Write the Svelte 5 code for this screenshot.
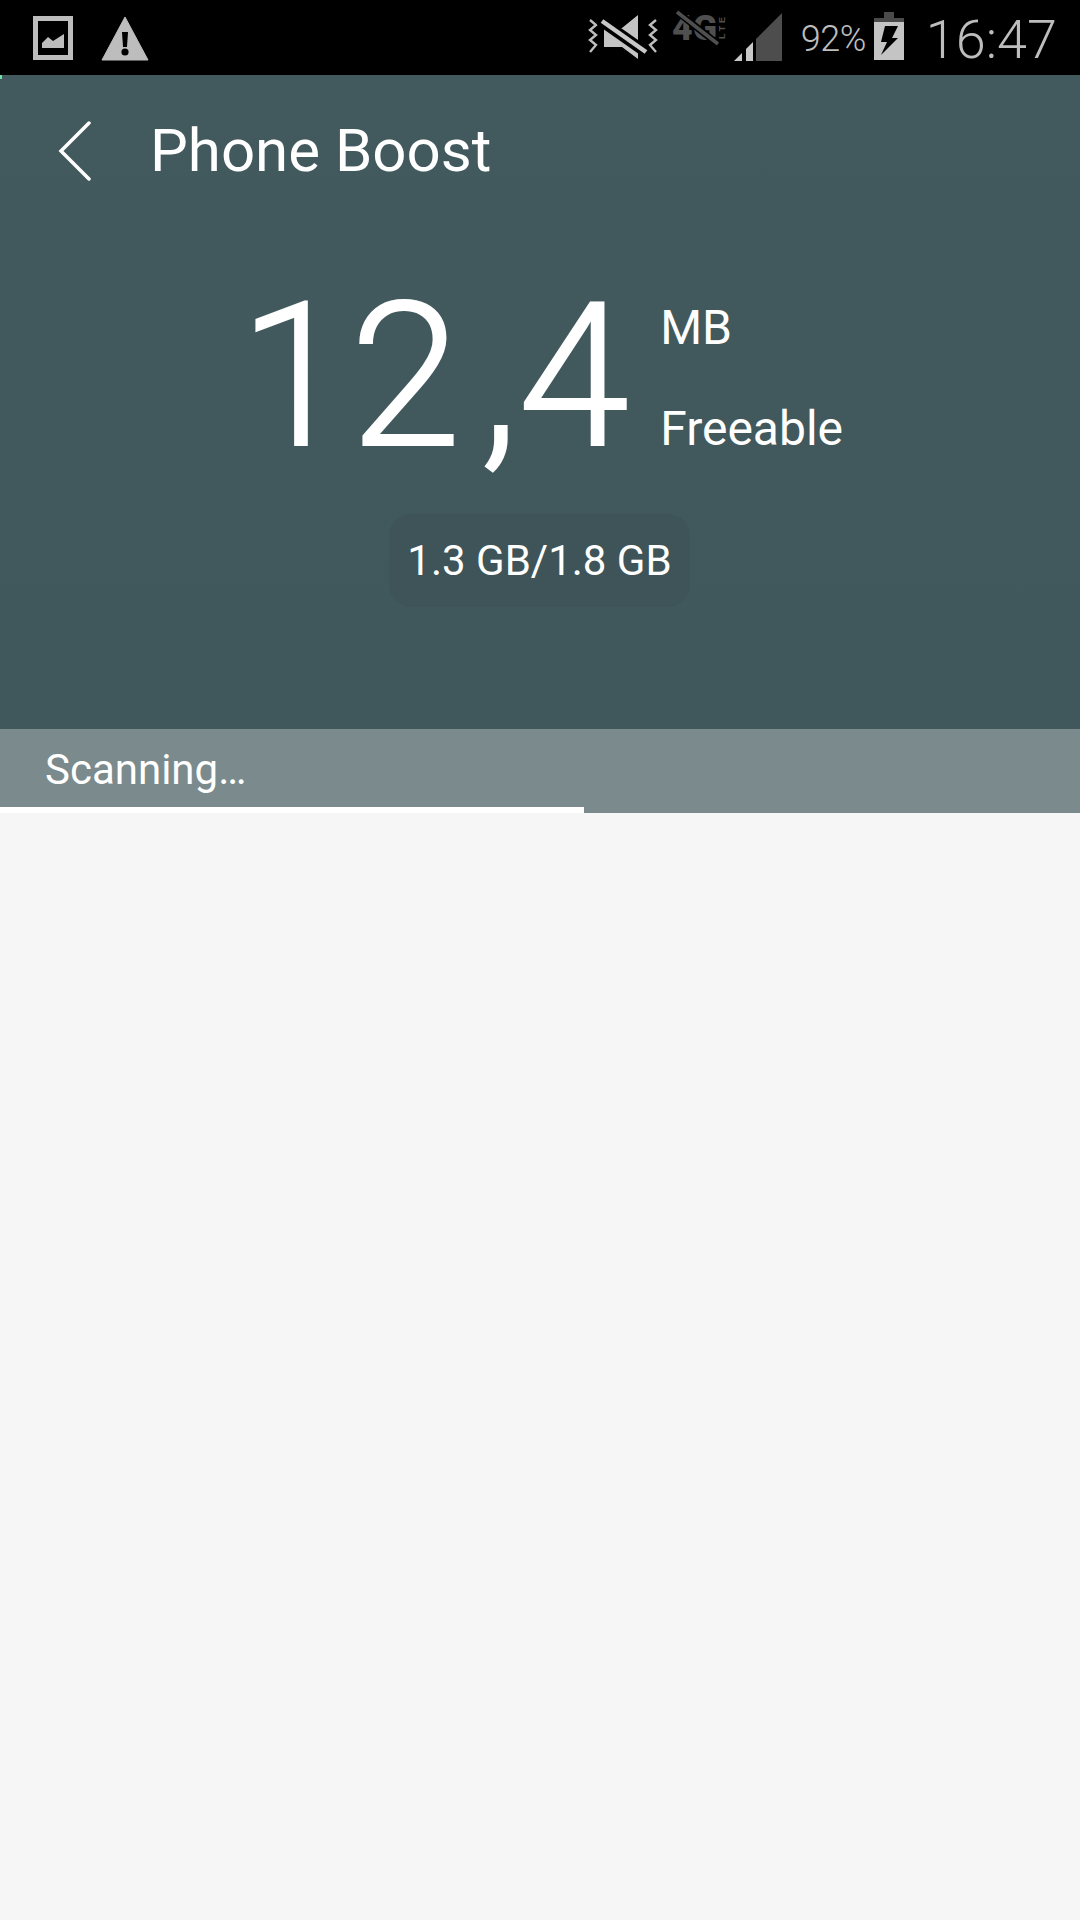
<script>
  const progress = 54.1;
</script>

<div class="screen">
  <div class="status">
    <svg class="pic" viewBox="33 16 40 44" width="40" height="44">
      <rect x="35.5" y="18.5" width="35" height="39" fill="none" stroke="#bdbdbd" stroke-width="5" />
      <polygon points="42,48 42,43 48,37 53,41 64,34 64,48" fill="#bdbdbd" />
    </svg>
    <svg class="warn" viewBox="101 16 48 45" width="48" height="45">
      <path d="M125 17 L148 60 H102 Z" fill="#bdbdbd" stroke="#bdbdbd" stroke-width="1" stroke-linejoin="round" />
      <path d="M122 32 H128 L127 47 H123 Z" fill="#000" />
      <circle cx="125" cy="52" r="3.6" fill="#000" />
    </svg>
    <div class="spacer"></div>
    <svg class="mute" viewBox="586 12 74 50" width="74" height="50">
      <polyline points="590,20 596,25 590,30 596,35 590,40 596,45 590,52" fill="none" stroke="#bdbdbd" stroke-width="2.4" />
      <polyline points="656,20 650,25 656,30 650,35 656,40 650,45 656,52" fill="none" stroke="#bdbdbd" stroke-width="2.4" />
      <polygon points="604,28 622,28 638,15 638,59 622,47 604,47" fill="#c4c4c4" />
      <line x1="600" y1="20" x2="647" y2="53" stroke="#000" stroke-width="11" />
      <line x1="602" y1="21" x2="646" y2="52" stroke="#c8c8c8" stroke-width="4.5" />
    </svg>
    <svg class="net" viewBox="670 10 58 36" width="58" height="36">
      <text x="672" y="40" class="g4" textLength="45" lengthAdjust="spacingAndGlyphs">4G</text>
      <text x="0" y="0" class="lte" transform="translate(725 39) rotate(-90)" textLength="22">LTE</text>
      <line x1="675" y1="10" x2="719" y2="45" stroke="#000" stroke-width="7" />
      <line x1="677" y1="12" x2="718" y2="44" stroke="#4f4f4f" stroke-width="3.5" />
    </svg>
    <svg class="signal" viewBox="734 13 48 48" width="48" height="48">
      <polygon points="734,61 742,53 742,61" fill="#c8c8c8" />
      <polygon points="746,61 746,49 753,42 753,61" fill="#c8c8c8" />
      <polygon points="756,61 756,39 782,13 782,61" fill="#4d4d4d" />
    </svg>
    <span class="pct">92%</span>
    <svg class="batt" viewBox="875 12 30 48" width="30" height="48">
      <rect x="885" y="12" width="10" height="7" fill="#4a4a4a" />
      <rect x="875" y="18" width="30" height="5" fill="#4a4a4a" />
      <rect x="875" y="22" width="30" height="38" fill="#c4c4c4" />
      <polygon points="886,26 899,26 893,38 899,38 882,55 888,42 882,42" fill="#000" />
    </svg>
    <span class="clock">16:47</span>
  </div>

  <div class="hero">
    <i class="dot"></i>
    <div class="topbar">
      <svg class="back" viewBox="0 0 34 60" width="34" height="60">
        <polyline points="31,2 3,30 31,58" fill="none" stroke="#fff" stroke-width="3.5" stroke-linecap="round" />
      </svg>
      <span class="title">Phone Boost</span>
    </div>
    <div class="reading">
      <span class="value">12<span class="comma">,</span>4</span>
      <div class="side">
        <span>MB</span>
        <span>Freeable</span>
      </div>
    </div>
    <div class="pill">1.3 GB/1.8 GB</div>
  </div>

  <div class="scan">
    <div class="scan-label">Scanning…</div>
    <div class="bar" style="width: {progress}%"></div>
  </div>
</div>

<style>
  :global(body) {
    margin: 0;
    background: #f6f6f6;
  }
  .screen {
    width: 1080px;
    height: 1920px;
    background: #f6f6f6;
    font-family: Roboto, sans-serif;
    overflow: hidden;
  }
  .status {
    height: 75px;
    background: #000;
    display: flex;
    align-items: flex-start;
    color: #bdbdbd;
  }
  .status svg {
    display: block;
    flex: none;
    overflow: visible;
  }
  .pic { margin: 16px 0 0 33px; }
  .warn { margin: 16px 0 0 28px; }
  .spacer { flex: 1; }
  .mute { margin-top: 12px; }
  .net { margin: 10px 0 0 10px; }
  .signal { margin: 13px 0 0 6px; }
  .g4 {
    font: 900 35px Roboto, sans-serif;
    fill: #4f4f4f;
  }
  .lte {
    font: 700 9px "Liberation Sans", sans-serif;
    fill: #4f4f4f;
  }
  .pct {
    margin: 17px 0 0 19px;
    font-size: 36px;
    line-height: 44px;
    font-weight: 300;
    letter-spacing: -0.5px;
  }
  .batt { margin: 12px 0 0 8px; }
  .clock {
    margin: 8px 23px 0 22px;
    font-size: 54px;
    line-height: 64px;
    font-weight: 300;
  }
  .hero {
    position: relative;
    height: 654px;
    box-sizing: border-box;
    background: linear-gradient(#425a5e, #40585b);
    color: #fff;
    display: flex;
    flex-direction: column;
  }
  .dot {
    position: absolute;
    left: 0;
    top: 0;
    width: 2px;
    height: 4px;
    background: #6fe0a8;
  }
  .topbar {
    display: flex;
    align-items: center;
    height: 60px;
    margin-top: 46px;
    padding-left: 58px;
  }
  .back { display: block; }
  .title {
    margin-left: 58px;
    font-size: 60px;
    line-height: 64px;
  }
  .reading {
    display: flex;
    margin-top: 76px;
    padding-left: 239px;
    height: 240px;
  }
  .value {
    font-size: 200px;
    line-height: 240px;
    font-weight: 300;
    -webkit-text-stroke: 2px #fff;
  }
  .comma {
    margin: 0 0 0 19px;
  }
  .side {
    display: flex;
    flex-direction: column;
    gap: 47px;
    margin-left: 31px;
    padding-top: 44px;
    font-size: 48px;
    line-height: 54px;
  }
  .pill {
    align-self: flex-start;
    margin: 17px 0 0 389px;
    width: 301px;
    height: 93px;
    border-radius: 22px;
    background: #3e5458;
    font-size: 42px;
    line-height: 93px;
    text-align: center;
  }
  .scan {
    height: 84px;
    background: #7a8a8d;
    color: #fff;
  }
  .scan-label {
    height: 78px;
    padding-left: 45px;
    font-size: 42px;
    line-height: 82px;
  }
  .bar {
    height: 6px;
    background: #fff;
  }
</style>
